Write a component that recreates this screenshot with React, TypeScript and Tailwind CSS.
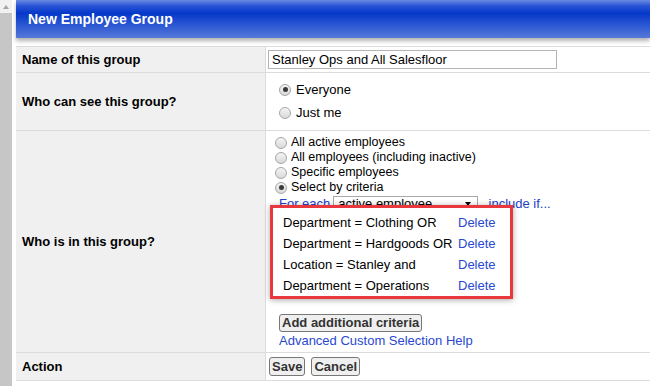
import React from "react";

const Radio = ({ checked = false }: { checked?: boolean }) => (
  <span className="relative inline-flex h-[12px] w-[12px] shrink-0 items-center justify-center rounded-full border border-[#a6a6a6] bg-[linear-gradient(#f4f4f4,#d9d9d9)]">
    {checked && <span className="h-[5px] w-[5px] rounded-full bg-[#3a3a3a]" />}
  </span>
);

const Row = ({
  label,
  children,
  className = "",
}: {
  label: string;
  children: React.ReactNode;
  className?: string;
}) => (
  <div className={`grid grid-cols-[250px_1fr] border-b border-[#dcdcdc] ${className}`}>
    <div className="flex items-center border-r border-[#dcdcdc] bg-[#f0f0f0] pl-[6px] text-[13px] font-bold text-black">
      {label}
    </div>
    <div className="bg-white">{children}</div>
  </div>
);

const criteria = [
  "Department = Clothing OR",
  "Department = Hardgoods OR",
  "Location = Stanley and",
  "Department = Operations",
];

export default function App() {
  return (
    <div className="flex h-[386px] w-[650px] overflow-hidden bg-white font-['Liberation_Sans',Arial,sans-serif] text-[13px] text-[#111]">
      {/* scrollbar */}
      <div className="flex w-[12px] flex-col">
        <div className="flex h-[13px] items-center justify-center bg-[#f1f1f1]">
          <span className="h-0 w-0 border-x-[3px] border-b-[4px] border-x-transparent border-b-[#a3a3a3]" />
        </div>
        <div className="flex-1 bg-[#c6c6c6]" />
      </div>

      <div className="ml-[4px] flex-1">
        <div className="flex h-[38px] items-center bg-[linear-gradient(#6b8be0_0%,#2a55d6_15%,#0537c9_35%,#2a56d3_65%,#5678d8_100%)] pl-[12px] text-[14px] font-bold text-white shadow-[0_3px_4px_rgba(0,0,0,0.3)]">
          New Employee Group
        </div>

        <div className="mt-[8px] border-t border-[#dcdcdc]">
          <Row label="Name of this group" className="h-[26px]">
            <div className="flex h-full items-center pl-[2px]">
              <div className="flex h-[19px] w-[289px] items-center border border-[#b4b4b4] pl-[3px] text-[13px] text-black">
                Stanley Ops and All Salesfloor
              </div>
            </div>
          </Row>

          <Row label="Who can see this group?" className="h-[58px]">
            <div className="flex flex-col pl-[13px] pt-[5px] text-black">
              <label className="flex h-[23px] items-center gap-[5px]">
                <Radio checked />
                Everyone
              </label>
              <label className="flex h-[23px] items-center gap-[5px]">
                <Radio />
                Just me
              </label>
            </div>
          </Row>

          <Row label="Who is in this group?" className="h-[222px]">
            <div className="flex flex-col pl-[9px] pt-[4px] text-black">
              {[
                ["All active employees", false],
                ["All employees (including inactive)", false],
                ["Specific employees", false],
                ["Select by criteria", true],
              ].map(([t, c]) => (
                <label key={t as string} className="flex h-[15px] items-center gap-[4px] text-[12.5px] leading-[15px]">
                  <Radio checked={c as boolean} />
                  {t}
                </label>
              ))}
              <div className="flex h-[18px] items-center gap-[3px] pl-[4px] text-[#2340c8]">
                <span>For each</span>
                <div className="flex h-[17px] w-[145px] items-center justify-between border border-[#a9a9a9] bg-white pl-[4px] pr-[6px] text-black">
                  <span>active employee</span>
                  <span className="h-0 w-0 border-x-[3px] border-t-[4px] border-x-transparent border-t-black" />
                </div>
                <span>, include if...</span>
              </div>

              <div className="relative -ml-[5px] -mt-[8px] w-[243px] border-[3px] border-[#e8383d] bg-white pl-[10px] pt-[4px] shadow-[0_1px_6px_rgba(0,0,0,0.35)]">
                {criteria.map((c) => (
                  <div key={c} className="flex h-[21px] items-center text-black">
                    <span className="w-[175px]">{c}</span>
                    <span className="text-[#2a48d0]">Delete</span>
                  </div>
                ))}
              </div>

              <div className="mt-[14px] pl-[4px]">
                <button className="h-[18px] rounded-[3px] border border-[#777] bg-[#efefef] px-[2px] text-[13px] font-bold leading-[15px] text-[#333]">
                  Add additional criteria
                </button>
              </div>
              <div className="pl-[4px] leading-[15px] text-[#2a48d0]">Advanced Custom Selection Help</div>
            </div>
          </Row>

          <Row label="Action" className="h-[28px]">
            <div className="flex h-full items-center gap-[6px] pl-[3px]">
              <button className="h-[19px] rounded-[3px] border border-[#777] bg-[#efefef] px-[2px] text-[13px] font-bold leading-[16px] text-[#333]">
                Save
              </button>
              <button className="h-[19px] rounded-[3px] border border-[#777] bg-[#efefef] px-[2px] text-[13px] font-bold leading-[16px] text-[#333]">
                Cancel
              </button>
            </div>
          </Row>
        </div>
      </div>
    </div>
  );
}
